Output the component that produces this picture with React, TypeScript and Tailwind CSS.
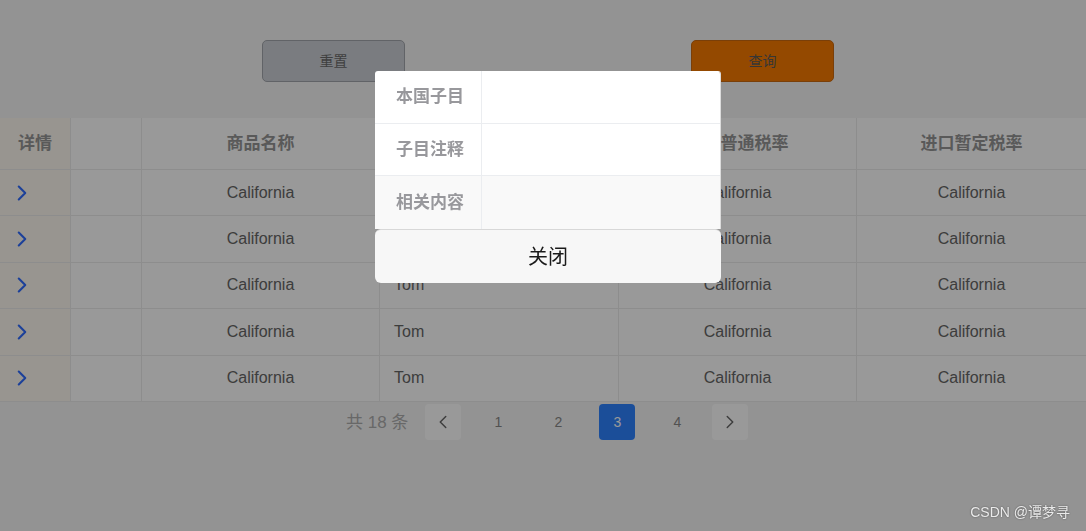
import { ChevronLeft, ChevronRight } from 'lucide-react';

const cjk = { fontFamily: '"Liberation Sans", "Noto Sans CJK SC", sans-serif' };

const rows = Array.from({ length: 5 }, () => ({ name: 'California', owner: 'Tom', normal: 'California', temp: 'California' }));
const pages = [
  { n: 1, ml: 'ml-[19px]' },
  { n: 2, ml: 'ml-[24px]' },
  { n: 3, ml: 'ml-[23px]' },
  { n: 4, ml: 'ml-[24px]' },
];

const cols = 'grid grid-cols-[71px_71px_238px_239px_238px_1fr]';

function DetailDialog() {
  const fields = [
    { label: '本国子目', bg: 'bg-white', h: 'h-[53px]' },
    { label: '子目注释', bg: 'bg-white', h: 'h-[52px]' },
    { label: '相关内容', bg: 'bg-[#f9f9f9]', h: 'h-[53px]' },
  ];
  return (
    <div className="absolute left-[375px] top-[71px] w-[346px]" style={cjk}>
      <div className="rounded-t-[3px] overflow-hidden border-r border-[#dcdcdc]">
        {fields.map((f, i) => (
          <div key={f.label} className={`flex ${f.h} ${f.bg} ${i < fields.length - 1 ? 'border-b border-[#ebedf0]' : ''}`}>
            <div className="w-[107px] shrink-0 border-r border-[#ebedf0] flex items-center pl-[21px] text-[17px] font-bold text-[#98989c]">{f.label}</div>
            <div className="flex-1" />
          </div>
        ))}
      </div>
      <div className="h-[54px] bg-[#f7f7f7] rounded-[6px] border-t border-[#d8d8d8] flex items-center justify-center text-[20px] text-[#1a1a1a]">关闭</div>
    </div>
  );
}

export default function App() {
  return (
    <div className="relative min-h-[531px] bg-[#f5f5f5] overflow-hidden" style={cjk}>
      {/* search actions */}
      <div className="h-[118px] relative">
        <button className="absolute left-[262px] top-[40px] w-[143px] h-[42px] rounded-[5px] bg-[#cbcfd5] border border-[#a2a6ac] text-[14px] text-[#6a6a6a]">重置</button>
        <button className="absolute left-[691px] top-[40px] w-[143px] h-[42px] rounded-[5px] bg-[#f77a00] border border-[#cc6a10] text-[14px] text-[#5a5a5a]">查询</button>
      </div>

      {/* result table */}
      <div className="bg-white">
        <div className={`${cols} h-[52px] border-b border-[#ececec] text-[17px] font-bold text-[#959595]`}>
          <div className="flex items-center justify-center bg-[#fdf8f0] border-r border-[#ececec]">详情</div>
          <div className="border-r border-[#ececec]" />
          <div className="flex items-center justify-center border-r border-[#ececec]">商品名称</div>
          <div className="flex items-center justify-center border-r border-[#ececec]">规格型号</div>
          <div className="flex items-center justify-center border-r border-[#ececec]">进口普通税率</div>
          <div className="flex items-center justify-center">进口暂定税率</div>
        </div>
        {rows.map((r, i) => (
          <div key={i} className={`${cols} h-[46.4px] border-b border-[#ececec] text-[16px] text-[#666]`}>
            <div className="flex items-center pl-[9px] bg-[#fdf8f0] border-r border-[#ececec]">
              <ChevronRight size={26} strokeWidth={1.9} className="text-[#2f6bff]" />
            </div>
            <div className="border-r border-[#ececec]" />
            <div className="flex items-center justify-center border-r border-[#ececec]">{r.name}</div>
            <div className="flex items-center pl-[14px] border-r border-[#ececec]">{r.owner}</div>
            <div className="flex items-center justify-center border-r border-[#ececec]">{r.normal}</div>
            <div className="flex items-center justify-center">{r.temp}</div>
          </div>
        ))}
      </div>

      {/* pagination */}
      <div className="flex items-center pl-[346px] pt-[1px] h-[40px]">
        <span className="text-[17px] text-[#adadad] mr-[17px]">共 18 条</span>
        <button className="w-9 h-9 rounded-[4px] bg-white flex items-center justify-center text-[#666]">
          <ChevronLeft size={22} strokeWidth={1.6} />
        </button>
        {pages.map((p) => (
          <button
            key={p.n}
            className={`${p.ml} w-9 h-9 rounded-[4px] flex items-center justify-center text-[14px] ${p.n === 3 ? 'bg-[#2d82ff] text-white' : 'text-[#888]'}`}
          >
            {p.n}
          </button>
        ))}
        <button className="ml-[17px] w-9 h-9 rounded-[4px] bg-white flex items-center justify-center text-[#666]">
          <ChevronRight size={22} strokeWidth={1.6} />
        </button>
      </div>

      {/* dialog */}
      <div className="fixed inset-0 bg-black/40">
        <DetailDialog />
        <span className="absolute right-[16px] bottom-[8px] text-[14px] text-white/85 [text-shadow:0_0_2px_rgba(0,0,0,0.5)]">CSDN @谭梦寻</span>
      </div>
    </div>
  );
}
